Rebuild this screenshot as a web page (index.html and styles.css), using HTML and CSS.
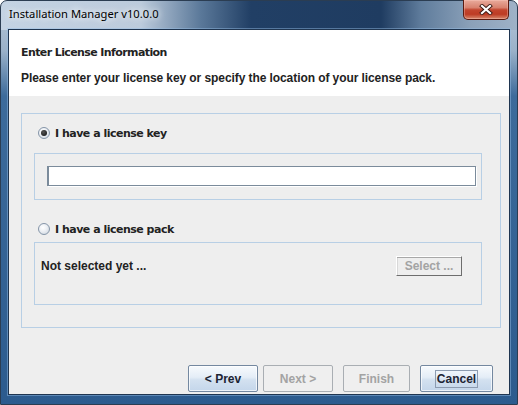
FILE: index.html
```html
<!DOCTYPE html>
<html>
<head>
<meta charset="utf-8">
<link rel="stylesheet" href="styles.css">
</head>
<body>
<div class="window">
  <div class="titlebar">
    <div class="title">Installation Manager v10.0.0</div>
    <div class="close">
      <svg width="14" height="11" viewBox="0 0 14 11">
        <path d="M3 2 L11 9 M11 2 L3 9" stroke="#3b1a14" stroke-width="4" stroke-linecap="square" fill="none"/>
        <path d="M3 2 L11 9 M11 2 L3 9" stroke="#ffffff" stroke-width="2.2" stroke-linecap="square" fill="none"/>
      </svg>
    </div>
  </div>
  <div class="client">
    <div class="header">
      <div class="h1">Enter License Information</div>
      <div class="h2">Please enter your license key or specify the location of your license pack.</div>
    </div>
    <div class="body">
      <div class="group">
        <div class="option">
          <span class="radio checked"></span>
          <span class="label">I have a license key</span>
        </div>
        <div class="panel key">
          <div class="field"></div>
        </div>
        <div class="option second">
          <span class="radio"></span>
          <span class="label">I have a license pack</span>
        </div>
        <div class="panel pack">
          <div class="status">Not selected yet ...</div>
          <div class="select">Select ...</div>
        </div>
      </div>
      <div class="footer">
        <div class="btn prev">&lt; Prev</div>
        <div class="btn disabled next">Next &gt;</div>
        <div class="btn disabled finish">Finish</div>
        <div class="btn cancel"><span class="focus">Cancel</span></div>
      </div>
    </div>
  </div>
</div>
</body>
</html>
```
FILE: styles.css
```css
body {
  margin: 0;
}

.window {
  width: 518px;
  height: 405px;
  box-sizing: border-box;
  border: 1px solid #2b3d52;
  border-radius: 7px 7px 0 0;
  padding: 0 7px 9px;
  display: flex;
  flex-direction: column;
  background:
    linear-gradient(to right, #c4d3e3 0, #bccbdc 140px, #5a7899 200px, #213f65 250px, #1f3c61 380px, #5f7c9c 420px, #8ba1b9 470px, #9fb2c7 100%) top left / 100% 29px no-repeat,
    linear-gradient(to bottom, #b7c8da 0, #9ab1c9 50px, #3d6b9b 95px, #2c5b8e 100%);
}

.titlebar {
  height: 28px;
  display: flex;
  align-items: flex-start;
}

.title {
  font: 11.2px "Noto Sans", sans-serif;
  color: #000;
  padding: 5px 0 0 1px;
  text-shadow: 0 0 6px #fff, 0 0 10px rgba(255, 255, 255, 0.7);
}

.close {
  margin-left: auto;
  margin-right: 1px;
  margin-top: -1px;
  width: 46px;
  height: 20px;
  box-sizing: border-box;
  border: 1px solid #5b1a10;
  border-top: none;
  border-radius: 0 0 5px 5px;
  background: linear-gradient(#e9ab9c 0, #d8826f 40%, #c2452e 52%, #bd3b24 75%, #d88a6e 100%);
  display: flex;
  align-items: center;
  justify-content: center;
  box-shadow: inset 0 0 0 1px rgba(255, 210, 200, 0.35);
}

.close svg {
  display: block;
}

.client {
  flex: 1;
  border: 1px solid #1f3550;
  background: #eeeeee;
  display: flex;
  flex-direction: column;
  box-shadow: 0 0 0 1px rgba(150, 190, 230, 0.45);
}

.header {
  height: 66px;
  box-sizing: border-box;
  background: #fff;
  padding: 15px 0 0 12px;
}

.h1 {
  font: bold 11px "DejaVu Sans", sans-serif;
  letter-spacing: -0.6px;
  line-height: 16px;
  color: #222;
}

.h2 {
  font: bold 12px "Liberation Sans", sans-serif;
  letter-spacing: -0.08px;
  line-height: 16px;
  margin-top: 9px;
  color: #222;
}

.body {
  flex: 1;
  padding: 17px 8px 0 12px;
  display: flex;
  flex-direction: column;
}

.group {
  height: 215px;
  box-sizing: border-box;
  border: 1px solid #b8cfe5;
  padding: 0 18px 0 12px;
}

.option {
  height: 20px;
  display: flex;
  align-items: center;
  padding-left: 4px;
  margin-top: 9px;
  font: bold 11px "DejaVu Sans", sans-serif;
  letter-spacing: -0.5px;
  color: #222;
}

.option.second {
  margin-top: 19px;
}

.radio {
  width: 12px;
  height: 12px;
  box-sizing: border-box;
  border-radius: 50%;
  border: 1px solid #8595a8;
  background: radial-gradient(circle at 40% 35%, #ffffff 0, #eef1f5 40%, #c9d2dc 100%);
  display: flex;
  align-items: center;
  justify-content: center;
  margin-right: 5px;
  flex: none;
}

.radio.checked::after {
  content: "";
  width: 6px;
  height: 6px;
  border-radius: 50%;
  background: radial-gradient(circle at 40% 35%, #555 0, #222 70%);
}

.panel {
  border: 1px solid #b8cfe5;
  box-sizing: border-box;
}

.panel.key {
  height: 47px;
  margin-top: 10px;
  padding: 12px 5px 0 12px;
}

.field {
  height: 20px;
  box-sizing: border-box;
  border: 1px solid #7b8b9b;
  border-left-width: 2px;
  background: #fff;
  box-shadow: 1px 1px 0 #fff;
}

.panel.pack {
  height: 63px;
  margin-top: 3px;
  padding: 13px 19px 0 6px;
  display: flex;
  justify-content: space-between;
  align-items: flex-start;
}

.status {
  font: bold 12px "Liberation Sans", sans-serif;
  line-height: 20px;
  color: #222;
}

.select {
  width: 66px;
  height: 20px;
  box-sizing: border-box;
  border: 1px solid;
  border-color: #ffffff #6d6d6d #6d6d6d #ffffff;
  box-shadow: inset 0 1px 0 #a8a8a8, inset 1px 0 0 #d8d8d8;
  font: bold 12px "Liberation Sans", sans-serif;
  color: #a3a3a3;
  display: flex;
  align-items: center;
  justify-content: center;
}

.footer {
  margin-top: 37px;
  display: flex;
  justify-content: flex-end;
  padding-right: 8px;
}

.btn {
  height: 27px;
  box-sizing: border-box;
  border: 1px solid #7488a0;
  border-radius: 2px;
  background: linear-gradient(#f7fafd 0, #e4edf7 45%, #d3e1f0 55%, #c4d6ea 100%);
  box-shadow: inset 0 0 0 1px rgba(255, 255, 255, 0.7);
  font: bold 12px "Liberation Sans", sans-serif;
  color: #1d2433;
  display: flex;
  align-items: center;
  justify-content: center;
}

.btn.disabled {
  border-color: #a9aeb3;
  background: #efefef;
  box-shadow: none;
  color: #a3a3a3;
}

.prev {
  width: 70px;
}

.next {
  width: 70px;
  margin-left: 5px;
}

.finish {
  width: 67px;
  margin-left: 10px;
}

.cancel {
  width: 73px;
  margin-left: 10px;
}

.focus {
  display: inline-block;
  height: 18px;
  box-sizing: border-box;
  line-height: 16px;
  padding: 0 1px;
  border: 1px solid #8c9bb0;
}
```
